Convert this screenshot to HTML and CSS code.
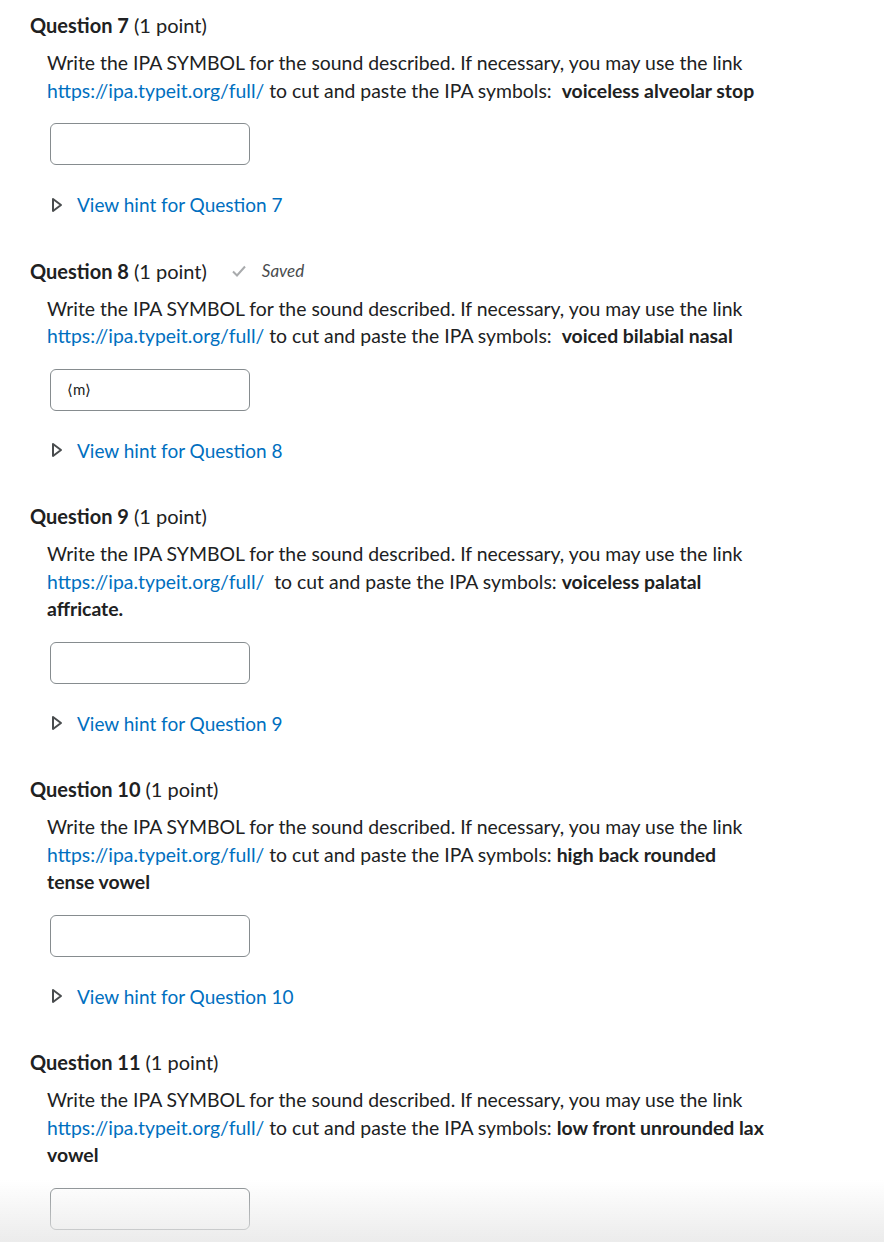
FILE: index.html
```html
<!DOCTYPE html>
<html lang="en">
<head>
<meta charset="utf-8">
<title>Quiz</title>
<link rel="stylesheet" href="styles.css">
</head>
<body>
<main class="quiz">

  <section class="question">
    <h2 class="q-title"><strong>Question 7</strong> (1 point)</h2>
    <div class="q-body">
      <p class="q-text">Write the IPA SYMBOL for the sound described. If necessary, you may use the link <a href="#">https://ipa.typeit.org/full/</a> to cut and paste the IPA symbols:&nbsp; <strong>voiceless alveolar stop</strong></p>
      <input class="answer" type="text" value="">
      <div class="hint"><svg class="tri" width="12" height="16" viewBox="0 0 12 16"><path d="M2 2 L10 8 L2 14 Z" fill="none" stroke="#494c4e" stroke-width="2" stroke-linejoin="round"/></svg><a href="#">View hint for Question 7</a></div>
    </div>
  </section>

  <section class="question">
    <h2 class="q-title"><strong>Question 8</strong> (1 point) <span class="saved"><svg width="16" height="14" viewBox="0 0 16 14"><path d="M2 7.5 L6 11.5 L14 2.5" fill="none" stroke="#a9abad" stroke-width="2"/></svg><em>Saved</em></span></h2>
    <div class="q-body">
      <p class="q-text">Write the IPA SYMBOL for the sound described. If necessary, you may use the link <a href="#">https://ipa.typeit.org/full/</a> to cut and paste the IPA symbols:&nbsp; <strong>voiced bilabial nasal</strong></p>
      <input class="answer filled" type="text" value="⟨m⟩">
      <div class="hint"><svg class="tri" width="12" height="16" viewBox="0 0 12 16"><path d="M2 2 L10 8 L2 14 Z" fill="none" stroke="#494c4e" stroke-width="2" stroke-linejoin="round"/></svg><a href="#">View hint for Question 8</a></div>
    </div>
  </section>

  <section class="question">
    <h2 class="q-title"><strong>Question 9</strong> (1 point)</h2>
    <div class="q-body">
      <p class="q-text">Write the IPA SYMBOL for the sound described. If necessary, you may use the link <a href="#">https://ipa.typeit.org/full/</a>&nbsp; to cut and paste the IPA symbols: <strong>voiceless palatal affricate.</strong></p>
      <input class="answer" type="text" value="">
      <div class="hint"><svg class="tri" width="12" height="16" viewBox="0 0 12 16"><path d="M2 2 L10 8 L2 14 Z" fill="none" stroke="#494c4e" stroke-width="2" stroke-linejoin="round"/></svg><a href="#">View hint for Question 9</a></div>
    </div>
  </section>

  <section class="question">
    <h2 class="q-title"><strong>Question 10</strong> (1 point)</h2>
    <div class="q-body">
      <p class="q-text">Write the IPA SYMBOL for the sound described. If necessary, you may use the link <a href="#">https://ipa.typeit.org/full/</a> to cut and paste the IPA symbols: <strong>high back rounded tense vowel</strong></p>
      <input class="answer" type="text" value="">
      <div class="hint"><svg class="tri" width="12" height="16" viewBox="0 0 12 16"><path d="M2 2 L10 8 L2 14 Z" fill="none" stroke="#494c4e" stroke-width="2" stroke-linejoin="round"/></svg><a href="#">View hint for Question 10</a></div>
    </div>
  </section>

  <section class="question">
    <h2 class="q-title"><strong>Question 11</strong> (1 point)</h2>
    <div class="q-body">
      <p class="q-text">Write the IPA SYMBOL for the sound described. If necessary, you may use the link <a href="#">https://ipa.typeit.org/full/</a> to cut and paste the IPA symbols: <strong>low front unrounded lax vowel</strong></p>
      <input class="answer" type="text" value="">
      <div class="hint"><svg class="tri" width="12" height="16" viewBox="0 0 12 16"><path d="M2 2 L10 8 L2 14 Z" fill="none" stroke="#494c4e" stroke-width="2" stroke-linejoin="round"/></svg><a href="#">View hint for Question 11</a></div>
    </div>
  </section>

</main>
<div class="fade"></div>
</body>
</html>
```

FILE: styles.css
```css
html, body {
  margin: 0;
  padding: 0;
  background: #ffffff;
}

body {
  font-family: Lato, "Noto Sans", "Liberation Sans", sans-serif;
  font-size: 19.4px;
  line-height: 27.5px;
  color: #202122;
}

.quiz {
  padding: 11px 0 0 30px;
  width: 780px;
}

.question {
  margin-bottom: 38px;
}

.q-title {
  margin: 0;
  font-size: 20px;
  line-height: 28px;
  font-weight: 400;
  color: #202122;
  display: flex;
  align-items: center;
}

.q-title strong {
  font-weight: 700;
  margin-right: 5px;
}

.saved {
  display: inline-flex;
  align-items: center;
  margin-left: 24px;
  font-size: 17px;
  color: #494c4e;
}

.saved svg {
  margin-right: 15px;
}

.q-body {
  padding-left: 17px;
  padding-top: 10px;
}

.q-text {
  margin: 0;
  width: 719px;
}

.q-text a,
.hint a {
  color: #006fbf;
  text-decoration: none;
}

.q-text strong {
  font-weight: 700;
}

.answer {
  display: block;
  box-sizing: border-box;
  margin: 19px 0 0 3px;
  width: 200px;
  height: 42px;
  border: 1px solid #868c8f;
  border-radius: 6px;
  background: #ffffff;
  font-family: Lato, "Noto Sans", "Liberation Sans", sans-serif;
  font-size: 15px;
  color: #202122;
  padding: 0 16px;
  outline: none;
}

.hint {
  margin: 26px 0 0 4px;
  display: flex;
  align-items: center;
  font-size: 19px;
}

.tri {
  margin-right: 14px;
}

.fade {
  position: fixed;
  left: 0;
  right: 0;
  bottom: 0;
  height: 62px;
  background: linear-gradient(to bottom, rgba(236,236,236,0) 0%, rgba(232,232,232,0.85) 100%);
  pointer-events: none;
}
```
